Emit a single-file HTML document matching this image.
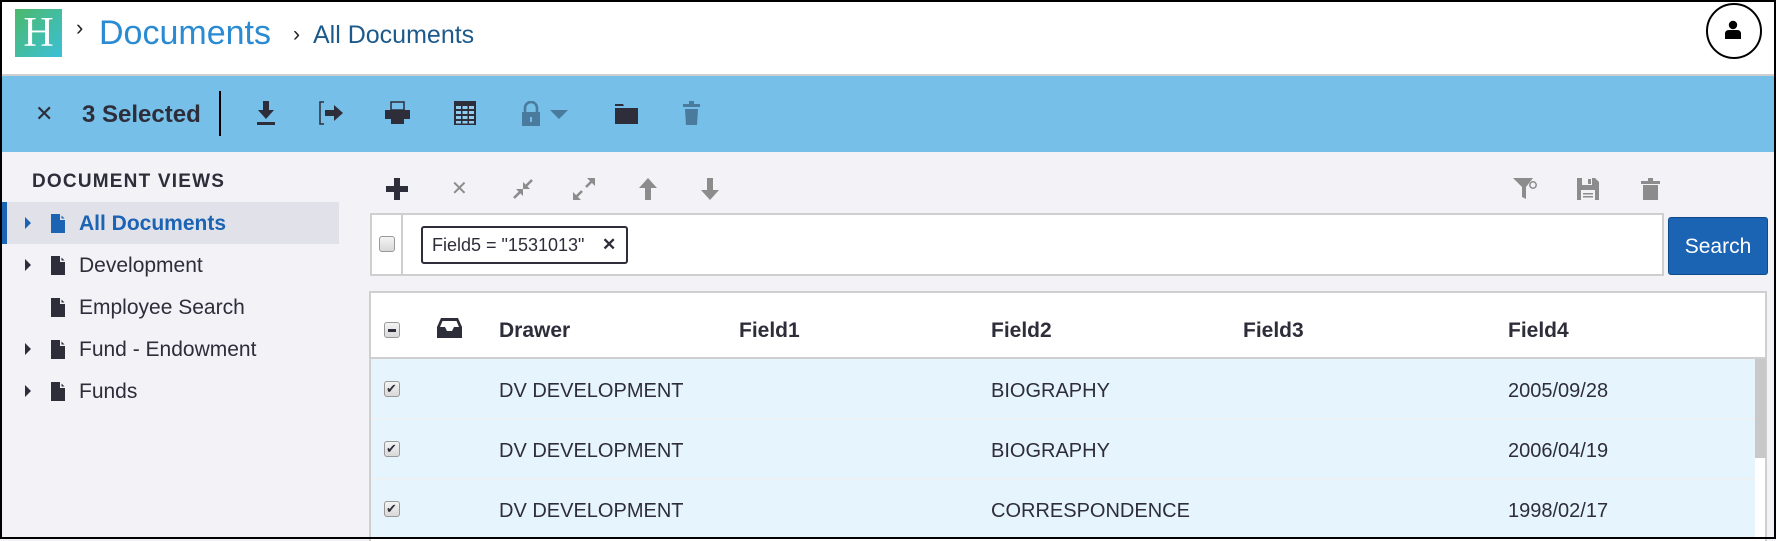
<!DOCTYPE html>
<html><head><meta charset="utf-8"><style>
*{box-sizing:border-box;margin:0;padding:0}
body{width:1776px;height:539px;overflow:hidden;font-family:"Liberation Sans",sans-serif;color:#2e2d3a;background:#f2f2f7;position:relative}
.a{position:absolute}
.frame{position:absolute;left:0;top:0;width:1776px;height:539px;border:2px solid #000;pointer-events:none;z-index:10}
.t{white-space:nowrap;line-height:1}
.cb{position:absolute;width:16px;height:16px;border:1px solid #999;border-radius:3px;background:linear-gradient(#f4f4f4,#d8d8d8)}
</style></head><body>
<div class="frame"></div>
<!-- header -->
<div class="a" style="left:0;top:0;width:1776px;height:74px;background:#fff"></div>
<div class="a" style="left:0;top:74px;width:1776px;height:2px;background:#cfcfcf"></div>
<div class="a" style="left:15px;top:9px;width:47px;height:48px;background:linear-gradient(135deg,#4cb96a,#3ac0d8)"></div>
<div class="a t" style="left:15px;top:12px;width:47px;text-align:center;font-family:'Liberation Serif',serif;font-size:42px;color:#fff">H</div>
<div class="a t" style="left:76px;top:17px;font-size:22px;font-weight:normal;color:#222">›</div>
<div class="a t" style="left:99px;top:16px;font-size:34px;color:#2a8ad2">Documents</div>
<div class="a t" style="left:293px;top:24px;font-size:21px;color:#222">›</div>
<div class="a t" style="left:313px;top:23px;font-size:25px;color:#1d5a8c">All Documents</div>
<div class="a" style="left:1706px;top:3px;width:56px;height:56px;border:2px solid #000;border-radius:50%"></div>
<svg class="a" style="left:1722px;top:19px" width="22" height="22" viewBox="0 0 22 22"><circle cx="11" cy="6" r="4.2" fill="#000"/><path d="M3 20 V15 Q3 11 7 11 H15 Q19 11 19 15 V20Z" fill="#000"/></svg>
<!-- blue toolbar -->
<div class="a" style="left:0;top:76px;width:1776px;height:76px;background:#75bfe9"></div>
<div class="a t" style="left:35px;top:103px;font-size:22px;color:#2e2d3a">✕</div>
<div class="a t" style="left:82px;top:103px;font-size:24px;font-weight:bold;color:#2e2d3a">3 Selected</div>
<div class="a" style="left:219px;top:91px;width:2px;height:45px;background:#000"></div>
<svg class="a" style="left:256px;top:100px" width="20" height="26" viewBox="0 0 20 26"><path d="M7 1H13V10H18L10 19L2 10H7Z" fill="#2e2d3a"/><rect x="1" y="22" width="18" height="3" fill="#2e2d3a"/></svg>
<svg class="a" style="left:319px;top:101px" width="26" height="24" viewBox="0 0 26 24"><path d="M5 1H1V23H5" fill="none" stroke="#2e2d3a" stroke-width="1.5"/><path d="M6 9H15V4L24 12L15 20V15H6Z" fill="#2e2d3a"/></svg>
<svg class="a" style="left:385px;top:101px" width="25" height="24" viewBox="0 0 25 24"><rect x="6" y="1" width="13" height="8" fill="none" stroke="#2e2d3a" stroke-width="1.5"/><rect x="0" y="9" width="25" height="9" fill="#2e2d3a"/><rect x="6" y="16" width="13" height="7" fill="#2e2d3a"/></svg>
<svg class="a" style="left:454px;top:101px" width="22" height="24" viewBox="0 0 22 24"><rect x="0" y="0" width="22" height="24" fill="#2e2d3a"/><g fill="#8fcdf0"><rect x="2" y="5" width="5" height="3"/><rect x="8.5" y="5" width="5" height="3"/><rect x="15" y="5" width="5" height="3"/><rect x="2" y="10" width="5" height="3"/><rect x="8.5" y="10" width="5" height="3"/><rect x="15" y="10" width="5" height="3"/><rect x="2" y="15" width="5" height="3"/><rect x="8.5" y="15" width="5" height="3"/><rect x="15" y="15" width="5" height="3"/><rect x="2" y="20" width="5" height="2.5"/><rect x="8.5" y="20" width="5" height="2.5"/><rect x="15" y="20" width="5" height="2.5"/></g></svg>
<svg class="a" style="left:520px;top:101px" width="22" height="25" viewBox="0 0 22 25"><path d="M5 11V7A6 6 0 0 1 17 7V11" fill="none" stroke="#4a7a9c" stroke-width="2.6"/><rect x="2" y="11" width="18" height="14" fill="#4a7a9c"/><rect x="10" y="16" width="2" height="5" fill="#75bfe9"/></svg>
<svg class="a" style="left:550px;top:110px" width="18" height="10" viewBox="0 0 18 10"><path d="M0 0H18L9 9Z" fill="#4a7a9c"/></svg>
<svg class="a" style="left:615px;top:103px" width="23" height="21" viewBox="0 0 23 21"><path d="M0 1H8L9 3H0Z" fill="#2e2d3a"/><rect x="0" y="5" width="23" height="16" fill="#2e2d3a"/></svg>
<svg class="a" style="left:683px;top:101px" width="17" height="24" viewBox="0 0 17 24"><rect x="0" y="3" width="17" height="3" fill="#4a7a9c"/><rect x="6" y="0" width="5" height="3" fill="#4a7a9c"/><path d="M2 8H15L14 24H3Z" fill="#4a7a9c"/></svg>
<!-- sidebar -->
<div class="a t" style="left:32px;top:172px;font-size:19px;font-weight:bold;letter-spacing:1.2px">DOCUMENT VIEWS</div>
<div class="a" style="left:2px;top:202px;width:337px;height:42px;background:#e1e1ea"></div>
<div class="a" style="left:2px;top:202px;width:5px;height:42px;background:#1b63b3"></div>
<div class="a t" style="left:79px;top:213px;font-size:21px;font-weight:bold;color:#1b63b3">All Documents</div>
<div class="a t" style="left:79px;top:255px;font-size:21px">Development</div>
<div class="a t" style="left:79px;top:297px;font-size:21px">Employee Search</div>
<div class="a t" style="left:79px;top:339px;font-size:21px">Fund - Endowment</div>
<div class="a t" style="left:79px;top:381px;font-size:21px">Funds</div>
<svg class="a" style="left:0;top:0" width="80" height="420" viewBox="0 0 80 420">
<g fill="#1b63b3"><path d="M25 217L31 223L25 229Z"/><path d="M51 214H60L65 219V233H51Z"/></g>
<g fill="#2e2d3a"><path d="M25 259L31 265L25 271Z"/><path d="M25 343L31 349L25 355Z"/><path d="M25 385L31 391L25 397Z"/>
<path d="M51 256H60L65 261V275H51Z"/><path d="M51 298H60L65 303V317H51Z"/><path d="M51 340H60L65 345V359H51Z"/><path d="M51 382H60L65 387V401H51Z"/></g>
<g fill="#e1e1ea"><path d="M60 214H61.5V218.5H65V220H60Z"/></g>
<g fill="#f2f2f7"><path d="M60 256H61.5V260.5H65V262H60Z"/><path d="M60 298H61.5V302.5H65V304H60Z"/><path d="M60 340H61.5V344.5H65V346H60Z"/><path d="M60 382H61.5V386.5H65V388H60Z"/></g>
</svg>
<!-- toolbar 2 -->
<svg class="a" style="left:386px;top:178px" width="22" height="22" viewBox="0 0 22 22"><path d="M8 0H14V8H22V14H14V22H8V14H0V8H8Z" fill="#2e2d3a"/></svg>
<div class="a t" style="left:451px;top:179px;font-size:20px;color:#8c8c8c">✕</div>
<svg class="a" style="left:512px;top:178px" width="22" height="22" viewBox="0 0 22 22" stroke="#8c8c8c" stroke-width="2.5" fill="#8c8c8c"><path d="M20 2L13 9M2 20L9 13"/><path d="M11 4V11H18Z" stroke="none"/><path d="M4 11H11V18Z" stroke="none"/></svg>
<svg class="a" style="left:573px;top:178px" width="22" height="22" viewBox="0 0 22 22" stroke="#8c8c8c" stroke-width="2.5" fill="#8c8c8c"><path d="M9 13L3 19M13 9L19 3"/><path d="M22 0V8L14 0Z" stroke="none"/><path d="M0 22V14L8 22Z" stroke="none"/></svg>
<svg class="a" style="left:639px;top:178px" width="18" height="22" viewBox="0 0 18 22"><path d="M9 0L18 10H12V22H6V10H0Z" fill="#8c8c8c"/></svg>
<svg class="a" style="left:701px;top:178px" width="18" height="22" viewBox="0 0 18 22"><path d="M9 22L18 12H12V0H6V12H0Z" fill="#8c8c8c"/></svg>
<svg class="a" style="left:1513px;top:178px" width="25" height="22" viewBox="0 0 25 22"><path d="M0 0H20L13 9V21L9 19V9Z" fill="#8c8c8c"/><circle cx="20" cy="7" r="3.2" fill="none" stroke="#8c8c8c" stroke-width="1.5"/></svg>
<svg class="a" style="left:1577px;top:178px" width="22" height="22" viewBox="0 0 22 22"><path d="M0 0H18L22 4V22H0Z" fill="#8c8c8c"/><rect x="5" y="0" width="10" height="7" fill="#f2f2f7"/><rect x="11" y="1" width="3" height="5" fill="#8c8c8c"/><rect x="4" y="12" width="14" height="10" fill="#f2f2f7"/><rect x="6" y="15" width="10" height="1.5" fill="#8c8c8c"/><rect x="6" y="18" width="10" height="1.5" fill="#8c8c8c"/></svg>
<svg class="a" style="left:1641px;top:178px" width="19" height="22" viewBox="0 0 19 22"><rect x="0" y="3" width="19" height="3" fill="#8c8c8c"/><rect x="7" y="0" width="5" height="3" fill="#8c8c8c"/><path d="M2 7H17V22H2Z" fill="#8c8c8c"/></svg>
<!-- search -->
<div class="a" style="left:370px;top:213px;width:1294px;height:63px;background:#fff;border:2px solid #cfcfcf"></div>
<div class="a" style="left:401px;top:215px;width:2px;height:59px;background:#cfcfcf"></div>
<div class="cb" style="left:379px;top:236px"></div>
<div class="a" style="left:421px;top:226px;width:207px;height:38px;border:2px solid #2e2d3a;border-radius:3px;background:#fff"></div>
<div class="a t" style="left:432px;top:236px;font-size:18px;color:#2e2d3a">Field5 = "1531013"</div>
<div class="a t" style="left:602px;top:236px;font-size:17px;font-weight:bold;color:#2e2d3a">✕</div>
<div class="a" style="left:1668px;top:217px;width:100px;height:58px;background:#1b63b3;border:1px solid #0f4a8c;border-radius:3px"></div>
<div class="a t" style="left:1668px;top:236px;width:100px;text-align:center;font-size:21px;color:#fff">Search</div>
<!-- table -->
<div class="a" style="left:369px;top:291px;width:1398px;height:250px;background:#fff;border:2px solid #cfcfcf;border-bottom:none"></div>
<div class="a" style="left:371px;top:357px;width:1395px;height:2px;background:#cfcfcf"></div>
<div class="a" style="left:371px;top:359px;width:1384px;height:180px;background:#e6f5fd"></div>
<div class="a" style="left:371px;top:418px;width:1384px;height:2px;background:#edf1f4"></div>
<div class="a" style="left:371px;top:478px;width:1384px;height:2px;background:#edf1f4"></div>
<div class="a" style="left:1755px;top:359px;width:11px;height:99px;background:#c8c8c8"></div>
<div class="cb" style="left:384px;top:322px"><div style="position:absolute;left:3px;top:6px;width:8px;height:3px;background:#2e2d3a"></div></div>
<svg class="a" style="left:437px;top:318px" width="25" height="20" viewBox="0 0 25 20"><path d="M4 0H21L25 9V20H0V9Z" fill="#2e2d3a"/><path d="M5.5 3H19.5L22 9H17L15 13H10L8 9H3Z" fill="#fff"/></svg>
<div class="a t" style="left:499px;top:320px;font-size:21px;font-weight:bold">Drawer</div>
<div class="a t" style="left:739px;top:320px;font-size:21px;font-weight:bold">Field1</div>
<div class="a t" style="left:991px;top:320px;font-size:21px;font-weight:bold">Field2</div>
<div class="a t" style="left:1243px;top:320px;font-size:21px;font-weight:bold">Field3</div>
<div class="a t" style="left:1508px;top:320px;font-size:21px;font-weight:bold">Field4</div>
<div class="cb" style="left:384px;top:381px"><span style="position:absolute;left:1px;top:-1px;font-size:13px;line-height:16px">✔</span></div>
<div class="cb" style="left:384px;top:441px"><span style="position:absolute;left:1px;top:-1px;font-size:13px;line-height:16px">✔</span></div>
<div class="cb" style="left:384px;top:501px"><span style="position:absolute;left:1px;top:-1px;font-size:13px;line-height:16px">✔</span></div>
<div class="a t" style="left:499px;top:381px;font-size:20px">DV DEVELOPMENT</div>
<div class="a t" style="left:991px;top:381px;font-size:20px">BIOGRAPHY</div>
<div class="a t" style="left:1508px;top:381px;font-size:20px">2005/09/28</div>
<div class="a t" style="left:499px;top:441px;font-size:20px">DV DEVELOPMENT</div>
<div class="a t" style="left:991px;top:441px;font-size:20px">BIOGRAPHY</div>
<div class="a t" style="left:1508px;top:441px;font-size:20px">2006/04/19</div>
<div class="a t" style="left:499px;top:501px;font-size:20px">DV DEVELOPMENT</div>
<div class="a t" style="left:991px;top:501px;font-size:20px">CORRESPONDENCE</div>
<div class="a t" style="left:1508px;top:501px;font-size:20px">1998/02/17</div>
</body></html>
